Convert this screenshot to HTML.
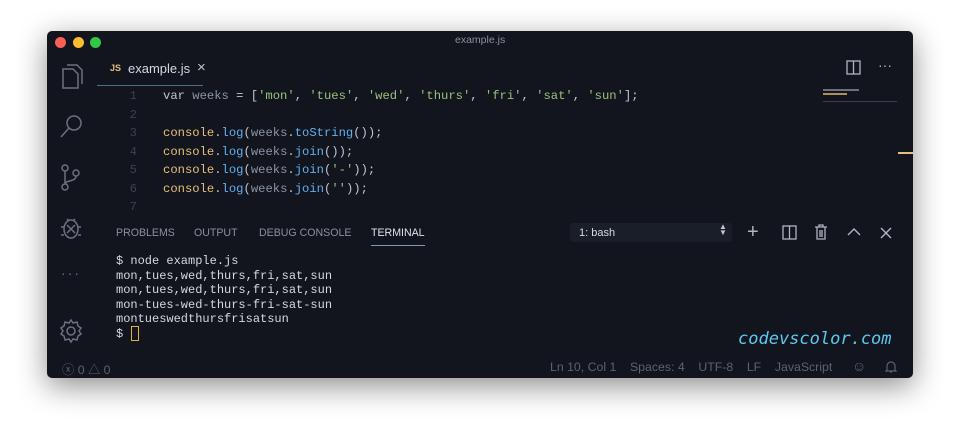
<!DOCTYPE html>
<html><head><style>
body{margin:0;width:960px;height:441px;background:#fff;position:relative;overflow:hidden;font-family:"Liberation Sans",sans-serif}
.win{position:absolute;left:47px;top:31px;width:866px;height:347px;background:#12151e;border-radius:5px;box-shadow:0 8px 30px rgba(0,0,0,.45)}
.dot{position:absolute;top:6px;width:11px;height:11px;border-radius:50%}
.t{position:absolute;white-space:pre}
.mono{font-family:"Liberation Mono",monospace;font-size:12.2px}
.ln{color:#3b4150;width:20px;text-align:right}
.y{color:#e5c07b}.b{color:#61afef}.g{color:#98c379}.w{color:#c0c5ce}.p{color:#8b95a5}
.ic{position:absolute;stroke:#6b7180;fill:none;stroke-width:1.5}
.tab{color:#8a909c;font-size:10.6px}
.term{color:#d5d8de;font-family:"Liberation Mono",monospace;font-size:12px;line-height:14.6px}
.sb{color:#5c6270;font-size:12.3px}
</style></head><body>
<div class="win">
<div class="dot" style="left:8px;background:#fc5f57"></div>
<div class="dot" style="left:26px;background:#fdbc2e"></div>
<div class="dot" style="left:43px;background:#33c748"></div>
<div class="t" style="left:408px;top:3px;color:#8a8f99;font-size:10.5px">example.js</div>
<svg class="ic" style="left:12px;top:32px" width="24" height="28"><path d="M4 6h10l5 5v14H4z M8 2h10l5 5v14"/></svg>
<svg class="ic" style="left:12px;top:82px" width="26" height="28"><circle cx="15" cy="10" r="7"/><path d="M10 15L2 24"/></svg>
<svg class="ic" style="left:12px;top:132px" width="24" height="30"><circle cx="6" cy="5" r="3"/><circle cx="6" cy="24" r="3"/><circle cx="17" cy="10" r="3"/><path d="M6 8v13M17 13c0 6-11 4-11 8"/></svg>
<svg class="ic" style="left:12px;top:184px" width="24" height="28"><ellipse cx="12" cy="14" rx="7" ry="9"/><path d="M8 10l8 8M16 10l-8 8M2 12h3M19 12h3M2 20h3M19 20h3M8 4l2 2M16 4l-2 2"/></svg>
<div class="t" style="left:14px;top:234px;color:#6b7180;font-size:14px;letter-spacing:2px">···</div>
<svg class="ic" style="left:11px;top:287px" width="26" height="26"><circle cx="13" cy="13" r="4"/><path d="M13 2l2 3 4-1 1 4 3 2-2 3 2 3-3 2-1 4-4-1-2 3-2-3-4 1-1-4-3-2 2-3-2-3 3-2 1-4 4 1z"/></svg>
<div class="t" style="left:63px;top:32px;color:#e5c07b;font-size:9px;font-weight:bold">JS</div>
<div class="t" style="left:81px;top:30px;color:#d5d8de;font-size:13px">example.js</div>
<div class="t" style="left:150px;top:28px;color:#c0c5ce;font-size:15px">×</div>
<div style="position:absolute;left:50px;top:54px;width:106px;height:1px;background:#4a7090"></div>
<svg class="ic" style="left:799px;top:29px;stroke:#b0b5bf;stroke-width:1.3" width="16" height="16"><rect x="1" y="1" width="13" height="13"/><path d="M7.5 1v13"/></svg>
<div class="t" style="left:831px;top:26px;color:#b0b5bf;font-size:14px">···</div>
<div style="position:absolute;left:776px;top:58px;width:36px;height:2px;background:#6a7080"></div>
<div style="position:absolute;left:776px;top:62px;width:24px;height:2px;background:#b09050"></div>
<div style="position:absolute;left:776px;top:70px;width:74px;height:1px;background:#3a3f4a"></div>
<div style="position:absolute;left:851px;top:121px;width:15px;height:2px;background:#e5c07b"></div>
<div class="mono" style="position:absolute;left:0;top:56px;line-height:18.5px">
<div class="t ln" style="left:70px;top:0">1</div>
<div class="t ln" style="left:70px;top:18.5px">2</div>
<div class="t ln" style="left:70px;top:37px">3</div>
<div class="t ln" style="left:70px;top:55.5px">4</div>
<div class="t ln" style="left:70px;top:74px">5</div>
<div class="t ln" style="left:70px;top:92.5px">6</div>
<div class="t ln" style="left:70px;top:111px">7</div>
<div class="t w" style="left:116px;top:0">var <span class="p">weeks</span> = [<span class="g">'mon'</span>, <span class="g">'tues'</span>, <span class="g">'wed'</span>, <span class="g">'thurs'</span>, <span class="g">'fri'</span>, <span class="g">'sat'</span>, <span class="g">'sun'</span>];</div>
<div class="t w" style="left:116px;top:37px"><span class="y">console</span>.<span class="b">log</span>(<span class="p">weeks</span>.<span class="b">toString</span>());</div>
<div class="t w" style="left:116px;top:55.5px"><span class="y">console</span>.<span class="b">log</span>(<span class="p">weeks</span>.<span class="b">join</span>());</div>
<div class="t w" style="left:116px;top:74px"><span class="y">console</span>.<span class="b">log</span>(<span class="p">weeks</span>.<span class="b">join</span>(<span class="g">'-'</span>));</div>
<div class="t w" style="left:116px;top:92.5px"><span class="y">console</span>.<span class="b">log</span>(<span class="p">weeks</span>.<span class="b">join</span>(<span class="g">''</span>));</div>
</div>
<div class="t tab" style="left:69px;top:196px">PROBLEMS</div>
<div class="t tab" style="left:147px;top:196px">OUTPUT</div>
<div class="t tab" style="left:212px;top:196px">DEBUG CONSOLE</div>
<div class="t tab" style="left:324px;top:196px;color:#e0e3e8">TERMINAL</div>
<div style="position:absolute;left:324px;top:214px;width:54px;height:1px;background:#7a9ab5"></div>
<div style="position:absolute;left:523px;top:192px;width:162px;height:19px;background:#1a1e28;border-radius:3px"></div>
<div class="t" style="left:532px;top:196px;color:#d5d8de;font-size:11px">1: bash</div>
<div class="t" style="left:672px;top:193px;color:#c0c5ce;font-size:8px;line-height:6px">▲<br>▼</div>
<div class="t" style="left:700px;top:190px;color:#b0b5bf;font-size:20px;font-weight:300">+</div>
<svg class="ic" style="left:735px;top:194px;stroke:#b0b5bf;stroke-width:1.3" width="16" height="16"><rect x="1" y="1" width="13" height="13"/><path d="M7.5 1v13"/></svg>
<svg class="ic" style="left:767px;top:193px;stroke:#b0b5bf;stroke-width:1.3" width="14" height="16"><path d="M1 3h12M5 3V1h4v2M3 3v12h8V3M6 6v7M8 6v7"/></svg>
<svg class="ic" style="left:800px;top:196px;stroke:#b0b5bf;stroke-width:1.4" width="14" height="10"><path d="M1 8l6-6 6 6"/></svg>
<svg class="ic" style="left:833px;top:196px;stroke:#b0b5bf;stroke-width:1.4" width="12" height="12"><path d="M1 1l10 10M11 1L1 11"/></svg>
<div class="t term" style="left:69px;top:223px">$ node example.js
mon,tues,wed,thurs,fri,sat,sun
mon,tues,wed,thurs,fri,sat,sun
mon-tues-wed-thurs-fri-sat-sun
montueswedthursfrisatsun
$ </div>
<div style="position:absolute;left:84px;top:295px;width:6px;height:13px;border:1.5px solid #e5b03b"></div>
<div class="t" style="left:691px;top:298px;color:#5ec8f0;font-family:'DejaVu Sans Mono',monospace;font-style:italic;font-size:17px">codevscolor.com</div>
<div class="t sb" style="left:15px;top:329px">ⓧ 0 △ 0</div>
<div class="t sb" style="left:503px;top:329px">Ln 10, Col 1&nbsp;&nbsp;&nbsp;&nbsp;Spaces: 4&nbsp;&nbsp;&nbsp;&nbsp;UTF-8&nbsp;&nbsp;&nbsp;&nbsp;LF&nbsp;&nbsp;&nbsp;&nbsp;JavaScript</div>
<div class="t sb" style="left:805px;top:327px;font-size:14px">☺</div>
<svg class="ic" style="left:838px;top:329px;stroke:#5c6270;stroke-width:1.2" width="12" height="14"><path d="M2 10V6a4 4 0 018 0v4l1 1H1zM5 12h2"/></svg>
</div>
</body></html>
